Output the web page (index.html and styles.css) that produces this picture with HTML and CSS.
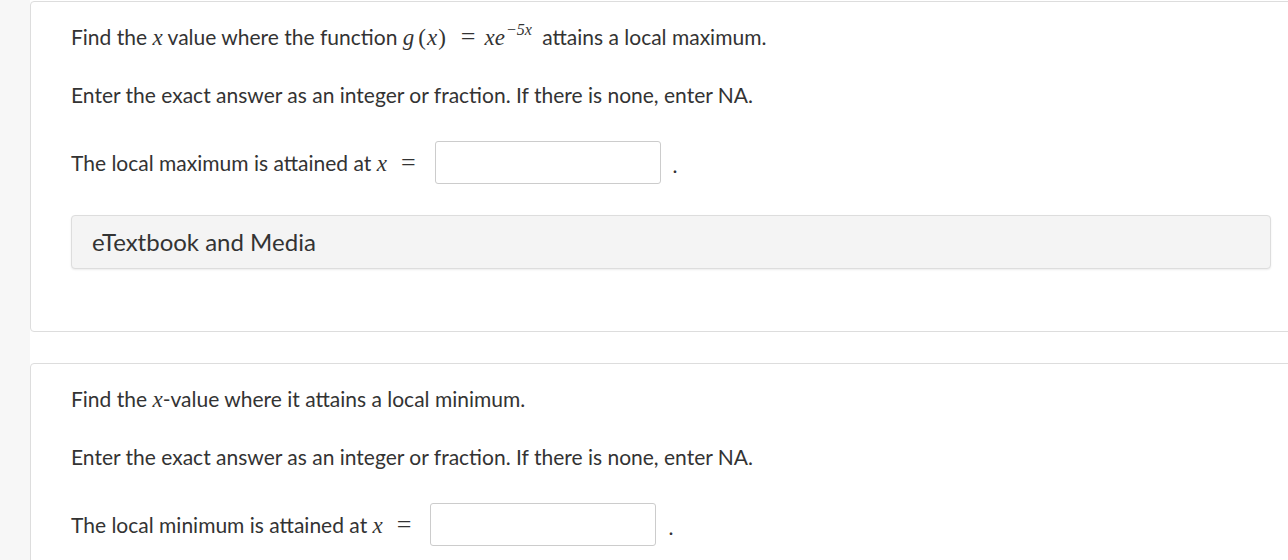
FILE: index.html
```html
<!DOCTYPE html>
<html lang="en">
<head>
  <meta charset="UTF-8">
  <title>Question - local extrema</title>
  <link rel="stylesheet" href="styles.css">
</head>
<body>
  <div class="page">
    <div class="sidebar"></div>
    <div class="main">
      <div class="card">
        <p>Find the <span class="math">x</span> value where the function <span class="math">g<span class="paren">(</span>x<span class="paren">)</span><span class="op">=</span>xe<sup>&minus;5x</sup></span> attains a local maximum.</p>
        <p class="last">Enter the exact answer as an integer or fraction. If there is none, enter NA.</p>
        <div class="answer-row">
          <span>The local maximum is attained at <span class="math">x<span class="op">=</span></span></span>
          <input type="text" class="answer-box">
          <span class="dot">.</span>
        </div>
        <div class="media-box">eTextbook and Media</div>
      </div>

      <div class="card">
        <p>Find the <span class="math">x</span>-value where it attains a local minimum.</p>
        <p class="last">Enter the exact answer as an integer or fraction. If there is none, enter NA.</p>
        <div class="answer-row">
          <span>The local minimum is attained at <span class="math">x<span class="op">=</span></span></span>
          <input type="text" class="answer-box">
          <span class="dot">.</span>
        </div>
      </div>
    </div>
  </div>
</body>
</html>
```

FILE: styles.css
```css
body {
  margin: 0;
  font-family: Lato, 'Liberation Sans', sans-serif;
  font-size: 21px;
  color: #333;
  background: #fff;
  overflow: hidden;
}
.page {
  display: flex;
  min-height: 560px;
}
.sidebar {
  width: 30px;
  flex: none;
  background: #f7f7f7;
}
.main {
  width: 1282px;
  flex: none;
  padding-top: 1px;
}
.card {
  border: 1px solid #ddd;
  border-radius: 4px;
  padding: 20px 40px 62px 40px;
  margin-bottom: 31px;
}
.card p {
  margin: 0 0 28px 0;
  line-height: 30px;
}
.card p.last {
  margin-bottom: 31px;
}
.math {
  font-family: 'Liberation Serif', 'DejaVu Serif', serif;
  font-style: italic;
  font-size: 23px;
  line-height: 0;
}
.math .paren {
  font-style: normal;
  margin: 0 1px;
}
.math .paren:first-child {
  margin-left: 4px;
}
.math .op {
  font-style: normal;
  font-size: 26px;
  margin: 0 9px 0 14px;
}
.math sup {
  font-size: 16px;
  vertical-align: 10px;
  line-height: 0;
  margin-left: 1px;
  margin-right: 5px;
}
.answer-row {
  display: flex;
  align-items: center;
  height: 43px;
  margin-bottom: 31px;
}
.answer-box {
  width: 226px;
  height: 43px;
  box-sizing: border-box;
  border: 1px solid #ccc;
  border-radius: 3px;
  margin: 0 0 0 10px;
  padding: 4px 8px;
  font: inherit;
}
.dot {
  margin-left: 12px;
  position: relative;
  top: 2px;
}
.media-box {
  background: #f4f4f4;
  border: 1px solid #ddd;
  border-radius: 4px;
  box-shadow: 0 1px 2px rgba(0,0,0,0.08);
  padding: 0 20px;
  height: 52px;
  line-height: 52px;
  font-size: 24px;
}
```
